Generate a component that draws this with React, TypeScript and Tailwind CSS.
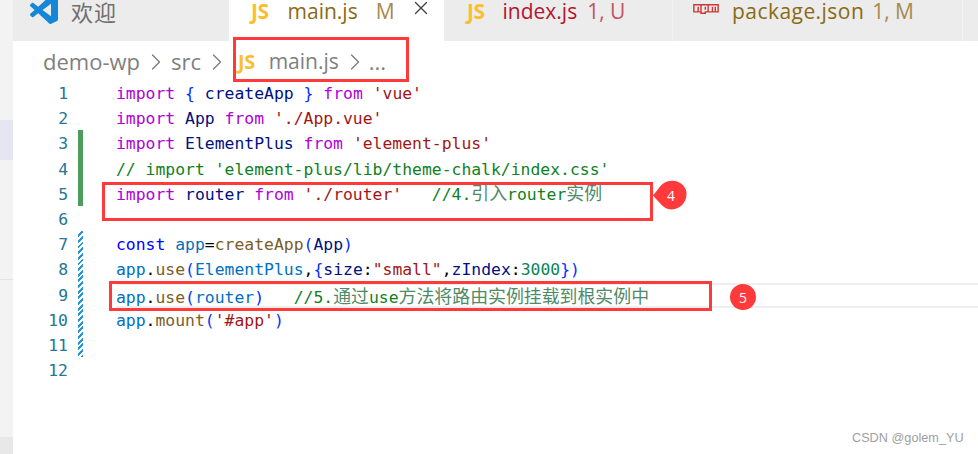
import React from "react";
import { ChevronRight, X } from "lucide-react";

const C = {
  k: "text-[#af00db]",
  v: "text-[#001080]",
  s: "text-[#a31515]",
  c: "text-[#0f7f1f]",
  h: "text-[#4f8a68]",
  f: "text-[#795e26]",
  b: "text-[#0431fa]",
  q: "text-[#0000ff]",
  n: "text-[#098658]",
  t: "text-[#000000]",
  g: "text-[#0070c1]",
};

type Seg = [keyof typeof C, string, boolean?];

const lines: Seg[][] = [
  [["k", "import"], ["t", " "], ["b", "{"], ["v", " createApp "], ["b", "}"], ["t", " "], ["k", "from"], ["t", " "], ["s", "'vue'"]],
  [["k", "import"], ["v", " App "], ["k", "from"], ["t", " "], ["s", "'./App.vue'"]],
  [["k", "import"], ["v", " ElementPlus "], ["k", "from"], ["t", " "], ["s", "'element-plus'"]],
  [["c", "// import 'element-plus/lib/theme-chalk/index.css'"]],
  [["k", "import"], ["v", " router "], ["k", "from"], ["t", " "], ["s", "'./router'"], ["t", "   "], ["c", "//4."], ["h", "引入", true], ["c", "router"], ["h", "实例", true]],
  [],
  [["q", "const"], ["t", " "], ["g", "app"], ["t", "="], ["f", "createApp"], ["b", "("], ["v", "App"], ["b", ")"]],
  [["g", "app"], ["t", "."], ["f", "use"], ["b", "("], ["g", "ElementPlus"], ["t", ","], ["b", "{"], ["v", "size"], ["t", ":"], ["s", "\"small\""], ["t", ","], ["v", "zIndex"], ["t", ":"], ["n", "3000"], ["b", "})"]],
  [["g", "app"], ["t", "."], ["f", "use"], ["b", "("], ["g", "router"], ["b", ")"], ["t", "   "], ["c", "//5."], ["h", "通过", true], ["c", "use"], ["h", "方法将路由实例挂载到根实例中", true]],
  [["g", "app"], ["t", "."], ["f", "mount"], ["b", "("], ["s", "'#app'"], ["b", ")"]],
  [],
  [],
];

function JsMark({ className }: { className: string }) {
  return (
    <span className={`font-bold text-[#fbbf2d] font-['Open_Sans',sans-serif] tracking-[-0.5px] ${className}`}>JS</span>
  );
}

function VsCodeLogo() {
  return (
    <svg viewBox="0 0 100 100" className="w-[28px] h-[28px] mt-[-4px]">
      <path
        fill="#1687d6"
        d="M96.46 10.8 75.86.87a6.23 6.23 0 0 0-7.1 1.2L29.35 38.06 12.17 25.02a4.16 4.16 0 0 0-5.32.24L1.36 30.25a4.17 4.17 0 0 0 0 6.16L16.25 50 1.36 63.59a4.17 4.17 0 0 0 0 6.16l5.5 4.99a4.16 4.16 0 0 0 5.32.24l17.17-13.04 39.41 35.99a6.22 6.22 0 0 0 7.1 1.2l20.6-9.92A6.25 6.25 0 0 0 100 83.58V16.42a6.25 6.25 0 0 0-3.54-5.63ZM75 72.7 45.1 50 75 27.3v45.4Z"
      />
    </svg>
  );
}

function NpmLogo() {
  return (
    <svg viewBox="0 0 18 7" className="w-[26px] h-[10px] mt-[-6px]">
      <path
        fill="#cb3837"
        fillRule="evenodd"
        d="M0,0h18v6H9v1H5V6H0V0z M1,5h2V2h1v3h1V1H1V5z M6,1v5h2V5h2V1H6z M8,2h1v2H8V2z M11,1v4h2V2h1v3h1V2h1v3h1V1H11z"
      />
    </svg>
  );
}

function Chevron({ className }: { className: string }) {
  return <ChevronRight size={28} strokeWidth={1.1} className={`text-[#7a7a7a] shrink-0 ${className}`} />;
}

export default function App() {
  return (
    <div className="relative flex w-[978px] h-[454px] overflow-hidden bg-white font-['Open_Sans','Noto_Sans_CJK_SC',sans-serif]">
      {/* Left sliver of the side bar */}
      <div className="w-[13px] shrink-0 flex flex-col bg-[#f3f3f3]">
        <div className="h-[120px]" />
        <div className="h-[40px] bg-[#e4e6f1]" />
        <div className="h-[119px]" />
        <div className="h-[1px] bg-[#e2e2e2]" />
        <div className="h-[157px]" />
        <div className="flex-1 bg-[#e8e8e8]" />
      </div>

      <div className="flex-1 flex flex-col min-w-0">
        {/* Tabs */}
        <div className="flex h-[41px] shrink-0 bg-[#ececec] text-[21px] leading-[22px]">
          <div className="w-[216px] flex items-start pl-[17px] pt-0 text-[#6f6f6f]">
            <VsCodeLogo />
            <span className="ml-[13px] text-[22px] tracking-[1px] font-['Noto_Sans_CJK_SC',sans-serif]">欢迎</span>
          </div>
          <div className="w-[215px] flex items-start bg-white pl-[22px] text-[#8a6a14]">
            <JsMark className="text-[21px]" />
            <span className="ml-[19px]">main.js</span>
            <span className="ml-[18px] text-[#a58a4c]">M</span>
            <X size={22} strokeWidth={1.5} className="ml-[15px] text-[#424242] mt-[-3px]" />
          </div>
          <div className="w-[229px] flex items-start pl-[23px] text-[#b3152c] border-r border-[#f3f3f3]">
            <JsMark className="text-[21px]" />
            <span className="ml-[18px]">index.js</span>
            <span className="ml-[10px] text-[#c4535f]">1, U</span>
          </div>
          <div className="w-[290px] flex items-center self-start pl-[20px] text-[#8a6a14] border-r border-[#f3f3f3] h-[41px]">
            <div className="flex items-start h-full">
              <div className="pt-[10px]"><NpmLogo /></div>
              <span className="ml-[13px] tracking-[0.45px]">package.json</span>
              <span className="ml-[8px] text-[#a58a4c]">1, M</span>
            </div>
          </div>
        </div>

        {/* Breadcrumbs */}
        <div className="flex items-center h-[39px] shrink-0 pl-[30px] pt-[2px] text-[22px] text-[#7f7f7f]">
          <span>demo-wp</span>
          <Chevron className="ml-[2px]" />
          <span className="ml-[1px]">src</span>
          <Chevron className="ml-[2px]" />
          <JsMark className="ml-[7px] text-[20px]" />
          <span className="ml-[14px] text-[21px]">main.js</span>
          <Chevron className="ml-[2px]" />
          <span className="ml-[0px]">...</span>
        </div>

        {/* Editor */}
        <div className="relative flex-1 flex pt-[1px] font-['DejaVu_Sans_Mono','Noto_Sans_CJK_SC',monospace] text-[16.4px]">
          <div className="w-[55px] shrink-0 text-right text-[#237893]">
            {lines.map((_, i) => (
              <div key={i} className="h-[25.2px] leading-[25.2px]">{i + 1}</div>
            ))}
          </div>
          <div className="w-[5px] shrink-0 ml-[10px] mt-[-1px] flex flex-col">
            <div className="h-[50.4px]" />
            <div className="h-[75.6px] bg-[#4f9c5f]" />
            <div className="h-[25.2px]" />
            <div className="h-[126px] bg-[repeating-linear-gradient(-45deg,#2496d8_0,#2496d8_2px,#ffffff_2px,#ffffff_4px)]" />
          </div>
          <div className="flex-1 ml-[33px] min-w-0 whitespace-pre">
            {lines.map((segs, i) => (
              <div
                key={i}
                className={`h-[25.2px] leading-[25.2px] ${i === 8 ? "border-y-2 border-[#eeeeee] leading-[21.2px]" : ""}`}
              >
                {segs.map((s, j) => (
                  <span key={j} className={`${C[s[0]]} ${s[2] ? "text-[17.9px] leading-none font-['Noto_Sans_CJK_SC',sans-serif]" : ""}`}>
                    {s[1]}
                  </span>
                ))}
              </div>
            ))}
          </div>
        </div>
      </div>

      {/* Annotations */}
      <div className="absolute left-[233px] top-[37px] w-[176px] h-[45px] border-[3px] border-[#fe3a3a]" />
      <div className="absolute left-[102px] top-[182px] w-[551px] h-[39px] border-[3px] border-[#fe3a3a]" />
      <div className="absolute left-[109px] top-[281px] w-[603px] h-[30px] border-[3px] border-[#fe3a3a]" />

      <div className="absolute left-[653px] top-[180px] w-[34px] h-[30px] flex items-center justify-center">
        <svg viewBox="0 0 34 30" className="absolute inset-0 w-full h-full">
          <path fill="#fe3a3a" d="M0 15 C4 12 6 6 11 3 C18 -1 29 0 33 10 C35 18 31 27 22 29 C14 31 9 26 5 21 C3 19 1 17 0 15Z" />
        </svg>
        <span className="relative text-white text-[14px] font-['Open_Sans',sans-serif] ml-[2px]">4</span>
      </div>
      <div className="absolute left-[730px] top-[284px] w-[26px] h-[26px] rounded-full bg-[#fe3a3a] flex items-center justify-center text-white text-[14px] font-['Open_Sans',sans-serif]">
        5
      </div>

      <div className="absolute left-[852px] top-[430px] text-[12.7px] leading-[16px] text-[#a0a0a0] font-['Liberation_Sans',sans-serif]">
        CSDN @golem_YU
      </div>
    </div>
  );
}
